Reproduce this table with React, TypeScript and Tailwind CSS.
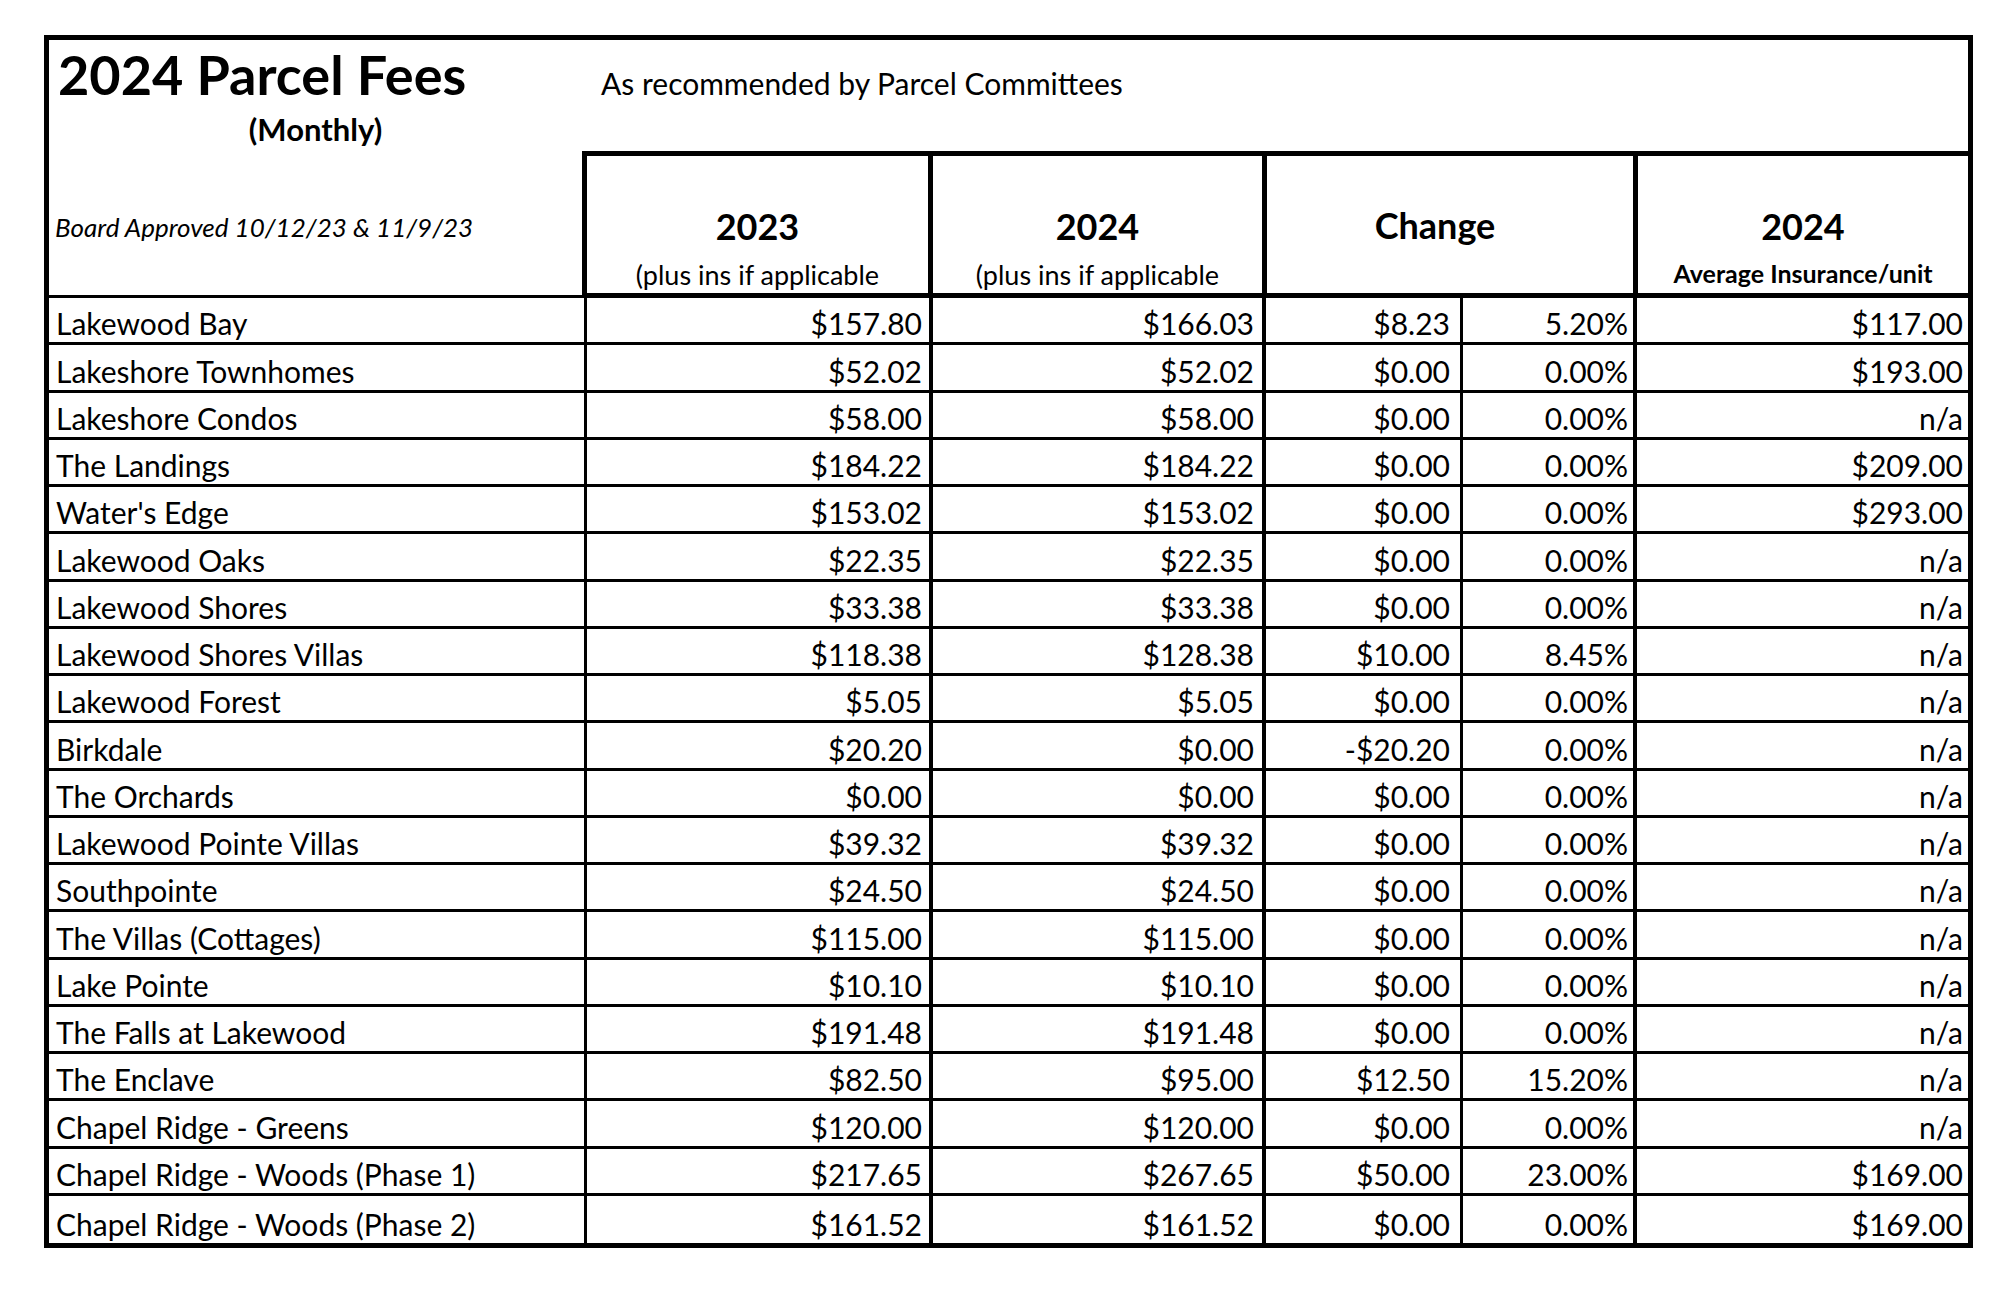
const rows = [
  ["Lakewood Bay", "$157.80", "$166.03", "$8.23", "5.20%", "$117.00"],
  ["Lakeshore Townhomes", "$52.02", "$52.02", "$0.00", "0.00%", "$193.00"],
  ["Lakeshore Condos", "$58.00", "$58.00", "$0.00", "0.00%", "n/a"],
  ["The Landings", "$184.22", "$184.22", "$0.00", "0.00%", "$209.00"],
  ["Water's Edge", "$153.02", "$153.02", "$0.00", "0.00%", "$293.00"],
  ["Lakewood Oaks", "$22.35", "$22.35", "$0.00", "0.00%", "n/a"],
  ["Lakewood Shores", "$33.38", "$33.38", "$0.00", "0.00%", "n/a"],
  ["Lakewood Shores Villas", "$118.38", "$128.38", "$10.00", "8.45%", "n/a"],
  ["Lakewood Forest", "$5.05", "$5.05", "$0.00", "0.00%", "n/a"],
  ["Birkdale", "$20.20", "$0.00", "-$20.20", "0.00%", "n/a"],
  ["The Orchards", "$0.00", "$0.00", "$0.00", "0.00%", "n/a"],
  ["Lakewood Pointe Villas", "$39.32", "$39.32", "$0.00", "0.00%", "n/a"],
  ["Southpointe", "$24.50", "$24.50", "$0.00", "0.00%", "n/a"],
  ["The Villas (Cottages)", "$115.00", "$115.00", "$0.00", "0.00%", "n/a"],
  ["Lake Pointe", "$10.10", "$10.10", "$0.00", "0.00%", "n/a"],
  ["The Falls at Lakewood", "$191.48", "$191.48", "$0.00", "0.00%", "n/a"],
  ["The Enclave", "$82.50", "$95.00", "$12.50", "15.20%", "n/a"],
  ["Chapel Ridge - Greens", "$120.00", "$120.00", "$0.00", "0.00%", "n/a"],
  ["Chapel Ridge - Woods (Phase 1)", "$217.65", "$267.65", "$50.00", "23.00%", "$169.00"],
  ["Chapel Ridge - Woods (Phase 2)", "$161.52", "$161.52", "$0.00", "0.00%", "$169.00"],
];

const cell = "flex items-end pb-[4px] border-black";

const App = () => {
  return (
    <div className="min-h-screen bg-white pt-[35px] pl-[44px] text-black font-['Lato',sans-serif]">
      <div className="w-[1929px] border-[5px] border-black">
        {/* Header area */}
        <div className="flex">
          <div className="w-[533px] h-[258px] border-b-[3px] border-black">
            <div className="pt-[8px] pl-[9px] text-[54px] leading-none font-bold">
              2024 Parcel Fees
            </div>
            <div className="mt-[12px] text-center text-[31px] leading-none font-bold">
              (Monthly)
            </div>
            <div className="mt-[69px] pl-[6px] text-[26px] leading-none italic">
              Board Approved 10/12/23 &amp; 11/9/23
            </div>
          </div>

          <div className="w-[1386px] flex flex-col">
            <div className="h-[111px] pt-[28px] pl-[19px] text-[30px] leading-none">
              As recommended by Parcel Committees
            </div>
            <div className="flex h-[147px] border-y-[5px] border-black">
              <div className="w-[351px] border-x-[5px] border-black flex flex-col items-center pt-[52px]">
                <div className="text-[36px] leading-none font-bold">2023</div>
                <div className="mt-[17px] text-[27px] leading-none">(plus ins if applicable</div>
              </div>
              <div className="w-[334px] border-r-[5px] border-black flex flex-col items-center pt-[52px]">
                <div className="text-[36px] leading-none font-bold">2024</div>
                <div className="mt-[17px] text-[27px] leading-none">(plus ins if applicable</div>
              </div>
              <div className="w-[371px] border-r-[5px] border-black flex flex-col items-center pt-[51px] pr-[30px]">
                <div className="text-[36px] leading-none font-bold">Change</div>
              </div>
              <div className="w-[330px] flex flex-col items-center pt-[52px]">
                <div className="text-[36px] leading-none font-bold">2024</div>
                <div className="mt-[17px] text-[25px] leading-none font-bold">Average Insurance/unit</div>
              </div>
            </div>
          </div>
        </div>

        {/* Data rows */}
        {rows.map((r, i) => (
          <div
            key={i}
            className={
              i === rows.length - 1
                ? "flex h-[47.25px] text-[30px] leading-none"
                : "flex h-[47.25px] text-[30px] leading-none border-b-[3px] border-black"
            }
          >
            <div className={`${cell} w-[538px] border-r-[3px] pl-[7px]`}>{r[0]}</div>
            <div className={`${cell} w-[346px] border-r-[4px] justify-end pr-[7px]`}>{r[1]}</div>
            <div className={`${cell} w-[333px] border-r-[4px] justify-end pr-[8px]`}>{r[2]}</div>
            <div className={`${cell} w-[197px] border-r-[3px] justify-end pr-[10px]`}>{r[3]}</div>
            <div className={`${cell} w-[174px] border-r-[4px] justify-end pr-[5px]`}>{r[4]}</div>
            <div className={`${cell} w-[331px] justify-end pr-[5px]`}>{r[5]}</div>
          </div>
        ))}
      </div>
    </div>
  );
};

export default App;
